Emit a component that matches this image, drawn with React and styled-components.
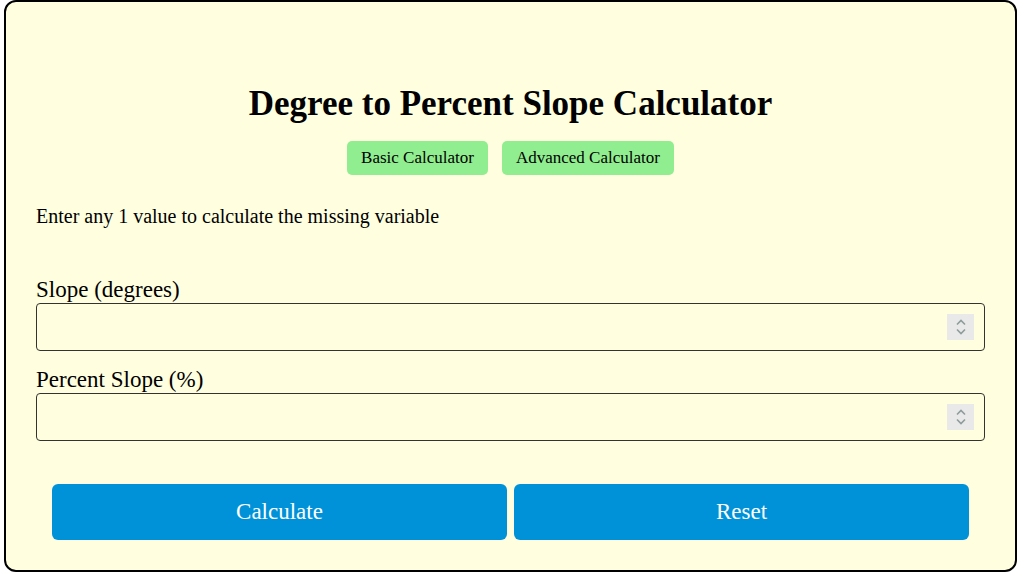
import React from "react";
import styled, { createGlobalStyle } from "styled-components";

const GlobalStyle = createGlobalStyle`
  html, body {
    margin: 0;
    padding: 0;
    background: #ffffff;
    font-family: "Liberation Serif", "Times New Roman", serif;
  }
`;

const Card = styled.div`
  box-sizing: border-box;
  width: 1013px;
  height: 572px;
  margin-left: 4px;
  padding: 0 30px;
  background-color: #ffffe0;
  border: 2px solid #000;
  border-radius: 12px;
  display: flex;
  flex-direction: column;
`;

const Title = styled.h1`
  margin: 83px 0 0;
  font-size: 35px;
  line-height: 38px;
  font-weight: bold;
  text-align: center;
  color: #000;
`;

const TabRow = styled.div`
  display: flex;
  justify-content: center;
  gap: 14px;
  margin-top: 18px;
`;

const TabButton = styled.button`
  height: 34px;
  padding: 0 14px;
  border: none;
  border-radius: 5px;
  background-color: #90ee90;
  color: #000;
  font-family: inherit;
  font-size: 17px;
  cursor: pointer;
`;

const Intro = styled.p`
  margin: 30px 0 0;
  font-size: 20px;
  line-height: 22px;
`;

const Field = styled.div`
  display: flex;
  flex-direction: column;
  margin-top: ${(p) => p.$top}px;
`;

const Label = styled.label`
  font-size: 23px;
  line-height: 23px;
  margin-bottom: 2px;
`;

const InputWrap = styled.div`
  position: relative;
`;

const NumberInput = styled.input`
  box-sizing: border-box;
  width: 100%;
  height: 48px;
  padding: 0 48px 0 12px;
  border: 1px solid #333;
  border-radius: 4px;
  background: transparent;
  font-family: inherit;
  font-size: 18px;
  -moz-appearance: textfield;

  &::-webkit-inner-spin-button,
  &::-webkit-outer-spin-button {
    -webkit-appearance: none;
    margin: 0;
  }
`;

const Spinner = styled.div`
  position: absolute;
  top: 50%;
  right: 11px;
  width: 27px;
  height: 26px;
  transform: translateY(-50%);
  background-color: #e9e9e9;
  display: flex;
  align-items: center;
  justify-content: center;
  pointer-events: none;
`;

const ActionRow = styled.div`
  display: flex;
  gap: 7px;
  margin-top: 43px;
  padding: 0 16px;
`;

const ActionButton = styled.button`
  flex: 1;
  height: 56px;
  border: none;
  border-radius: 6px;
  background-color: #0092d8;
  color: #fff;
  font-family: inherit;
  font-size: 23px;
  cursor: pointer;
`;

function SpinIcon() {
  return (
    <svg width="12" height="18" viewBox="0 0 12 18" fill="none">
      <path d="M2 6.5 L6 2.5 L10 6.5" stroke="#8e9c9c" strokeWidth="1.6" />
      <path d="M2 11.5 L6 15.5 L10 11.5" stroke="#8e9c9c" strokeWidth="1.6" />
    </svg>
  );
}

function NumberField({ id, label, top }) {
  return (
    <Field $top={top}>
      <Label htmlFor={id}>{label}</Label>
      <InputWrap>
        <NumberInput id={id} type="number" />
        <Spinner>
          <SpinIcon />
        </Spinner>
      </InputWrap>
    </Field>
  );
}

export default function App() {
  return (
    <>
      <GlobalStyle />
      <Card>
        <Title>Degree to Percent Slope Calculator</Title>
        <TabRow>
          <TabButton>Basic Calculator</TabButton>
          <TabButton>Advanced Calculator</TabButton>
        </TabRow>
        <Intro>Enter any 1 value to calculate the missing variable</Intro>

        <NumberField id="degrees" label="Slope (degrees)" top={51} />
        <NumberField id="percent" label="Percent Slope (%)" top={17} />

        <ActionRow>
          <ActionButton>Calculate</ActionButton>
          <ActionButton>Reset</ActionButton>
        </ActionRow>
      </Card>
    </>
  );
}
